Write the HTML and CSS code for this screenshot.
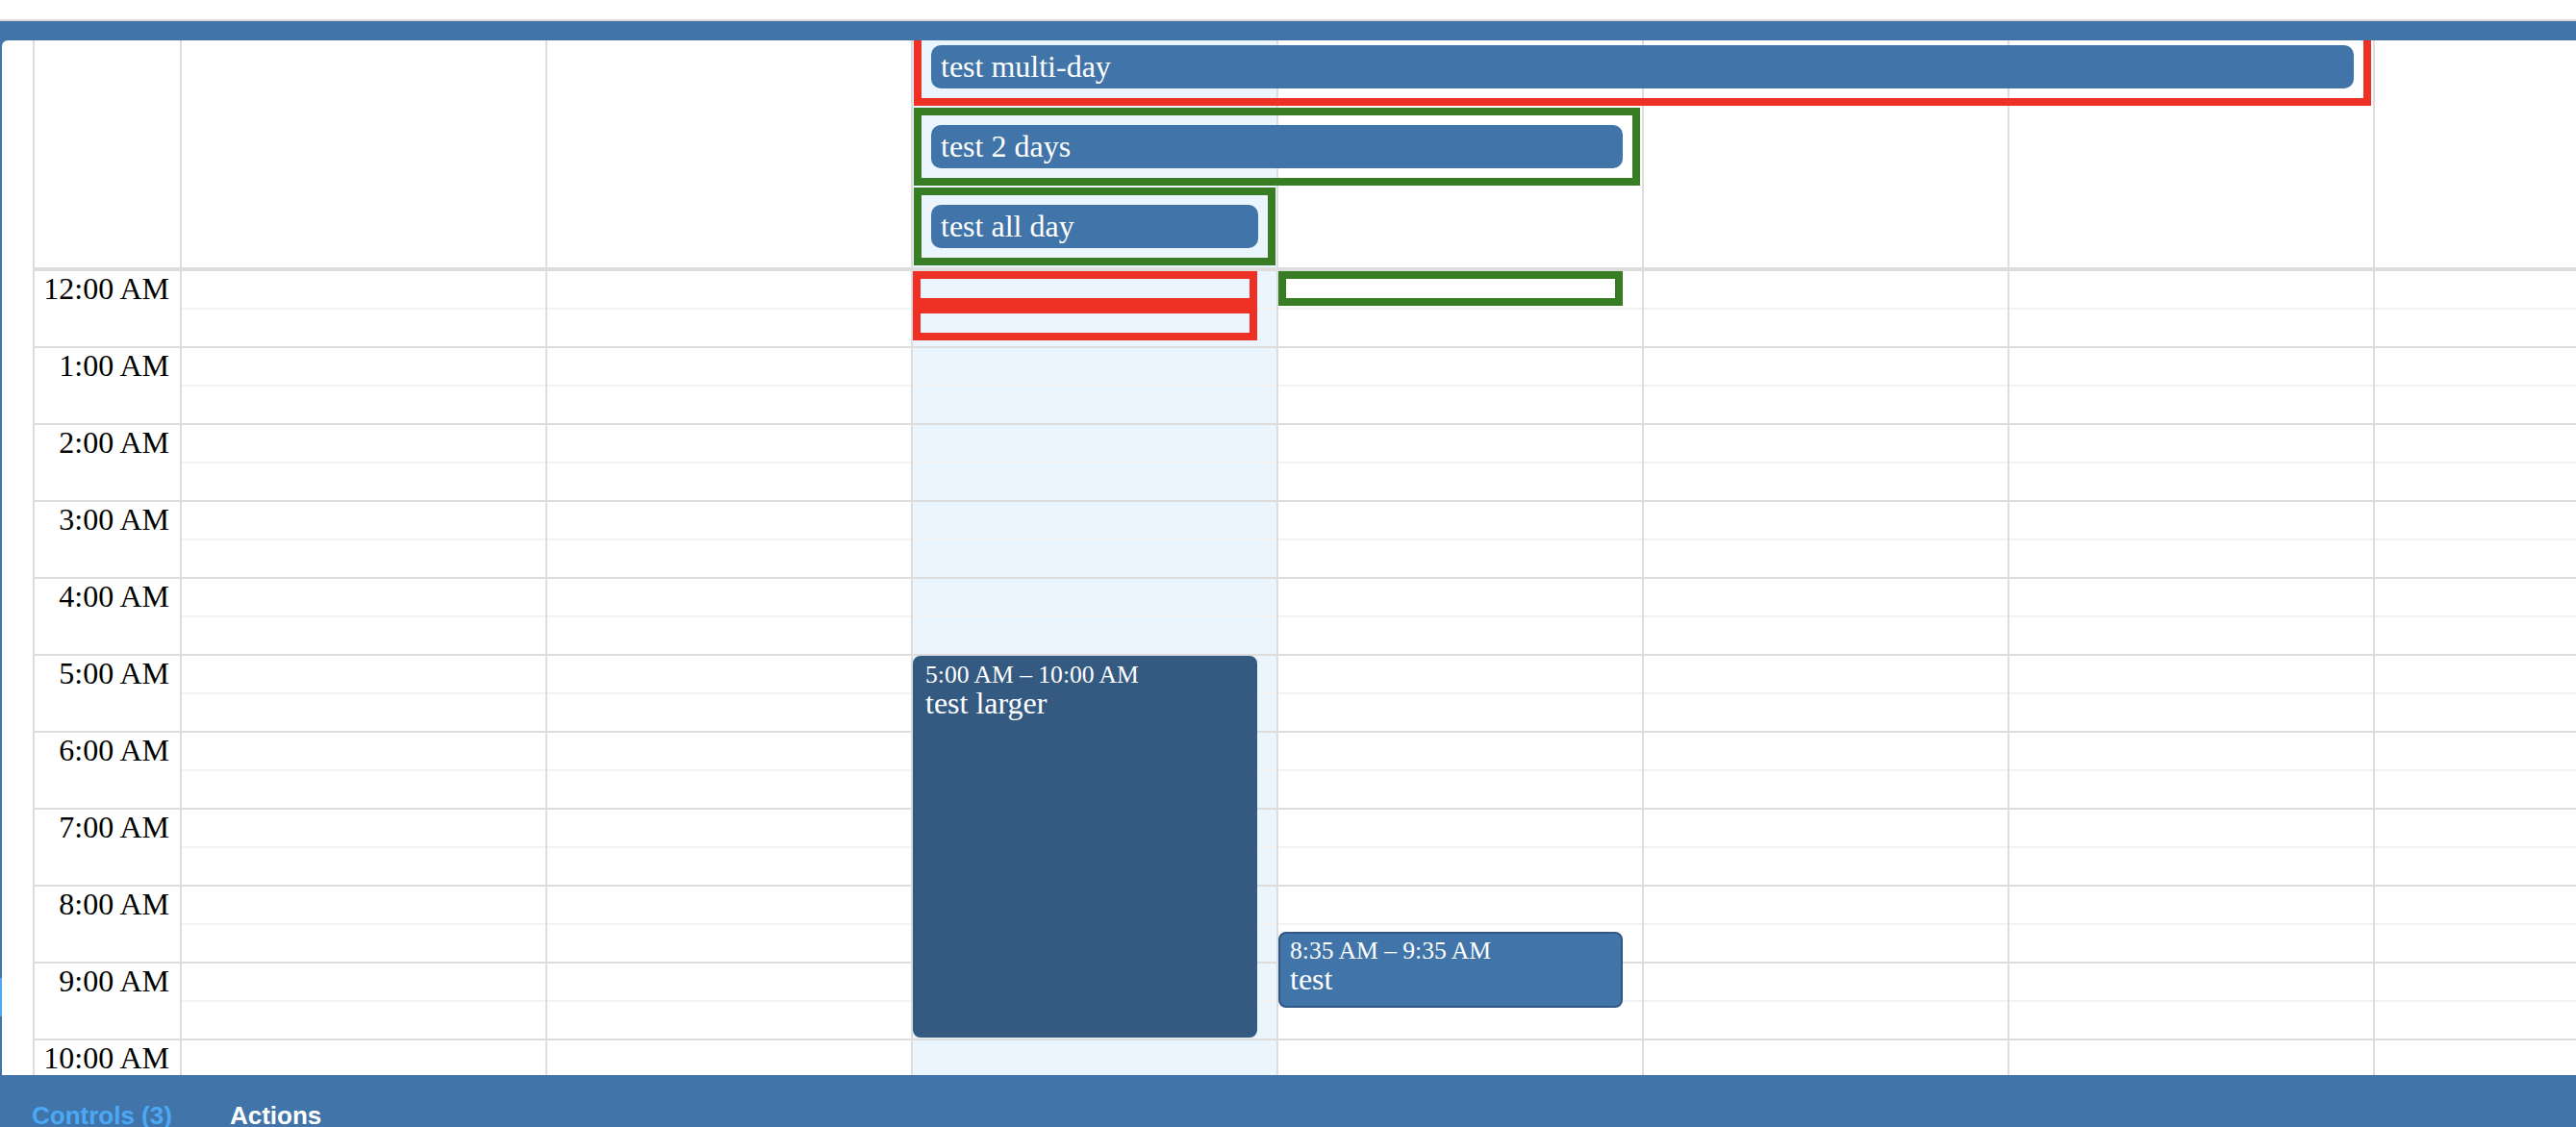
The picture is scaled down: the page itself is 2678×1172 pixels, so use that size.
FILE: index.html
```html
<!DOCTYPE html>
<html lang="en">
<head>
<meta charset="utf-8">
<title>Calendar week view</title>
<link rel="stylesheet" href="styles.css">
</head>
<body>
<div class="app">
  <div class="toolbar"></div>
  <div class="panel">
    <div class="panel-head"></div>
    <div class="panel-main">
      <div class="edge"><div class="edge-mark"></div></div>
      <div class="preview">
        <div class="calendar">
          <div class="allday">
            <div class="grid-bg">
              <div class="bg-cell axis-cell"></div>
              <div class="bg-cell"></div>
              <div class="bg-cell"></div>
              <div class="bg-cell today"></div>
              <div class="bg-cell"></div>
              <div class="bg-cell"></div>
              <div class="bg-cell"></div>
              <div class="bg-cell"></div>
            </div>
            <div class="allday-rows">
              <div class="ad-row">
                <div class="ad-box box-red span-4"><div class="ad-event">test multi-day</div></div>
              </div>
              <div class="ad-row">
                <div class="ad-box box-green span-2"><div class="ad-event">test 2 days</div></div>
              </div>
              <div class="ad-row">
                <div class="ad-box box-green span-1"><div class="ad-event">test all day</div></div>
              </div>
            </div>
          </div>
          <div class="divider"></div>
          <div class="timegrid">
            <div class="grid-fill">
              <div class="fill-cell"></div>
              <div class="fill-cell"></div>
              <div class="fill-cell"></div>
              <div class="fill-cell today"></div>
              <div class="fill-cell"></div>
              <div class="fill-cell"></div>
              <div class="fill-cell"></div>
              <div class="fill-cell"></div>
            </div>
            <div class="hours">
              <div class="hour-row first"><div class="hour-label">12:00 AM</div><div class="hour-slots"><div class="half"></div></div></div>
              <div class="hour-row"><div class="hour-label">1:00 AM</div><div class="hour-slots"><div class="half"></div></div></div>
              <div class="hour-row"><div class="hour-label">2:00 AM</div><div class="hour-slots"><div class="half"></div></div></div>
              <div class="hour-row"><div class="hour-label">3:00 AM</div><div class="hour-slots"><div class="half"></div></div></div>
              <div class="hour-row"><div class="hour-label">4:00 AM</div><div class="hour-slots"><div class="half"></div></div></div>
              <div class="hour-row"><div class="hour-label">5:00 AM</div><div class="hour-slots"><div class="half"></div></div></div>
              <div class="hour-row"><div class="hour-label">6:00 AM</div><div class="hour-slots"><div class="half"></div></div></div>
              <div class="hour-row"><div class="hour-label">7:00 AM</div><div class="hour-slots"><div class="half"></div></div></div>
              <div class="hour-row"><div class="hour-label">8:00 AM</div><div class="hour-slots"><div class="half"></div></div></div>
              <div class="hour-row"><div class="hour-label">9:00 AM</div><div class="hour-slots"><div class="half"></div></div></div>
              <div class="hour-row"><div class="hour-label">10:00 AM</div><div class="hour-slots"><div class="half"></div></div></div>
            </div>
            <div class="grid-lines">
              <div class="line-cell"></div>
              <div class="line-cell"></div>
              <div class="line-cell"></div>
              <div class="line-cell"></div>
              <div class="line-cell"></div>
              <div class="line-cell"></div>
              <div class="line-cell"></div>
              <div class="line-cell"></div>
            </div>
            <div class="tg-events">
              <div class="ev-axis"></div>
              <div class="ev-col"></div>
              <div class="ev-col"></div>
              <div class="ev-col">
                <div class="outline-box box-red" style="top:0px;height:36px"></div>
                <div class="outline-box box-red" style="top:36px;height:36px"></div>
                <div class="tevent dark" style="top:400px;height:397px">
                  <div class="ev-time">5:00 AM – 10:00 AM</div>
                  <div class="ev-title">test larger</div>
                </div>
              </div>
              <div class="ev-col">
                <div class="outline-box box-green" style="top:0px;height:36px"></div>
                <div class="tevent" style="top:687px;height:79px">
                  <div class="ev-time">8:35 AM – 9:35 AM</div>
                  <div class="ev-title">test</div>
                </div>
              </div>
              <div class="ev-col"></div>
              <div class="ev-col"></div>
              <div class="ev-col"></div>
            </div>
          </div>
        </div>
      </div>
    </div>
    <div class="addons">
      <div class="tab active">Controls (3)</div>
      <div class="tab">Actions</div>
    </div>
  </div>
</div>
</body>
</html>
```

FILE: styles.css
```css
* { box-sizing: border-box; }

html, body {
  margin: 0;
  padding: 0;
  width: 2678px;
  height: 1172px;
  overflow: hidden;
  background: #ffffff;
  font-family: "Liberation Serif", "Times New Roman", serif;
  color: #000;
}

.app {
  width: 2678px;
  height: 1172px;
  overflow: hidden;
}

.toolbar {
  height: 22px;
  background: #ffffff;
  border-bottom: 2px solid #d9d9d9;
}

.panel {
  background: #4174a8;
}

.panel-head {
  height: 20px;
}

.panel-main {
  display: flex;
  height: 1076px;
}

.edge {
  width: 2px;
  flex: none;
}

.edge-mark {
  margin-top: 975px;
  height: 40px;
  background: #4ea8f2;
}

.preview {
  flex: 1;
  background: #ffffff;
  border-top-left-radius: 6px;
  overflow: hidden;
}

.calendar {
  margin-left: 32px;
  width: 2813px;
}

/* ---------- all-day section ---------- */
.allday {
  display: grid;
  height: 236px;
  overflow: hidden;
}

.allday > * {
  grid-area: 1 / 1;
}

.grid-bg,
.grid-fill,
.grid-lines,
.tg-events,
.ad-row {
  display: grid;
  grid-template-columns: 153px repeat(7, 380px);
}

.bg-cell {
  border-left: 2px solid #dddddd;
}

.bg-cell.today,
.fill-cell.today {
  background: #ebf5fe;
}

.allday-rows {
  align-self: start;
  margin-top: -13px;
  display: flex;
  flex-direction: column;
  gap: 2px;
}

.ad-box {
  grid-column: 4 / span 1;
  height: 81px;
  border: 8px solid;
  padding: 10px;
  margin: 0 2px 0 3px;
}

.ad-box.span-2 { grid-column: 4 / span 2; }
.ad-box.span-4 { grid-column: 4 / span 4; }
.ad-box.span-1 { margin-right: 1px; }

.box-red { border-color: #ee3124; border-style: solid; }
.box-green { border-color: #387c23; border-style: solid; }

.ad-event {
  height: 45px;
  border-radius: 10px;
  background: #4174a8;
  color: #ffffff;
  font-size: 32px;
  line-height: 45px;
  padding-left: 10px;
  white-space: nowrap;
  overflow: hidden;
}

.divider {
  height: 4px;
  background: #dddddd;
}

/* ---------- time grid ---------- */
.timegrid {
  display: grid;
}

.timegrid > * {
  grid-area: 1 / 1;
}

.hours {
  display: flex;
  flex-direction: column;
}

.hour-row {
  display: grid;
  grid-template-columns: 153px 2660px;
  height: 80px;
  border-top: 2px solid #dddddd;
}

.hour-row.first {
  height: 78px;
  border-top: none;
}

.hour-label {
  text-align: right;
  padding-right: 11px;
  font-size: 32px;
  line-height: 36px;
  white-space: nowrap;
}

.hour-slots {
  padding-left: 2px;
}

.half {
  height: 40px;
  border-bottom: 2px solid #f2f2f2;
}

.line-cell {
  border-left: 2px solid #dddddd;
}

.ev-col {
  position: relative;
  border-left: 2px solid transparent;
}

.outline-box {
  position: absolute;
  left: 0;
  right: 20px;
  border-width: 8px;
  background: transparent;
}

.tevent {
  position: absolute;
  left: 0;
  right: 20px;
  background: #4174a8;
  border: 2px solid #2f5886;
  border-radius: 8px;
  color: #ffffff;
  padding: 4px 10px;
  overflow: hidden;
}

.tevent.dark {
  background: #345a82;
  border-color: #345a82;
  padding-left: 11px;
}

.ev-time {
  font-size: 25.6px;
  line-height: 28px;
  white-space: nowrap;
}

.ev-title {
  font-size: 32px;
  line-height: 30px;
  white-space: nowrap;
}

/* ---------- addons bar ---------- */
.addons {
  display: flex;
  height: 84px;
  padding-left: 3px;
}

.tab {
  padding: 0 30px;
  font-family: "Liberation Sans", Arial, sans-serif;
  font-weight: bold;
  font-size: 26px;
  line-height: 84px;
  color: #ffffff;
  white-space: nowrap;
}

.tab.active {
  color: #4ba8f5;
}
```
